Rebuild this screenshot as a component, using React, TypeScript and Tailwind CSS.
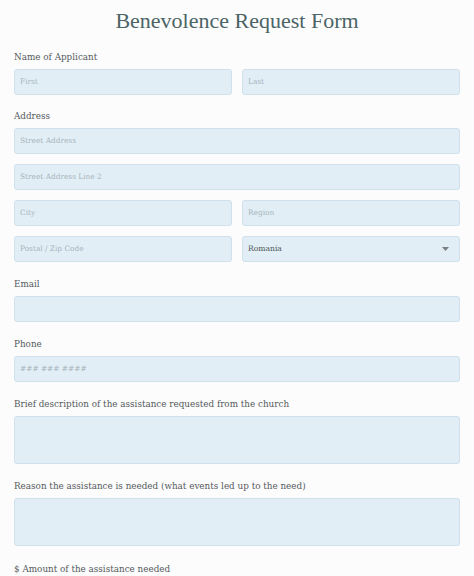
const titleFont = { fontFamily: '"Liberation Serif", serif' }
const bodyFont = { fontFamily: '"DejaVu Serif", "Liberation Serif", serif' }

function Field({ placeholder, className = '' }: { placeholder?: string; className?: string }) {
  return (
    <div
      className={`h-[26px] flex items-center px-[5px] rounded-[3px] border border-[#cfe1ec] bg-[#e1eef6] text-[7.4px] text-[#a7b4bb] ${className}`}
    >
      {placeholder}
    </div>
  )
}

function Label({ children }: { children: React.ReactNode }) {
  return <div className="text-[8.8px] leading-[14px] text-[#555a5c] mb-[5px]">{children}</div>
}

export default function App() {
  return (
    <main className="min-h-screen bg-[#fcfcfc] px-[14px] pt-[8px] pb-6" style={bodyFont}>
      <h1 className="text-center text-[22px] leading-[26px] text-[#4b6466]" style={titleFont}>
        Benevolence Request Form
      </h1>

      <div className="mt-[16px]">
        <Label>Name of Applicant</Label>
        <div className="grid grid-cols-2 gap-[10px]">
          <Field placeholder="First" />
          <Field placeholder="Last" />
        </div>
      </div>

      <div className="mt-[14px]">
        <Label>Address</Label>
        <div className="flex flex-col gap-[10px]">
          <Field placeholder="Street Address" />
          <Field placeholder="Street Address Line 2" />
          <div className="grid grid-cols-2 gap-[10px]">
            <Field placeholder="City" />
            <Field placeholder="Region" />
          </div>
          <div className="grid grid-cols-2 gap-[10px]">
            <Field placeholder="Postal / Zip Code" />
            <div className="h-[26px] flex items-center justify-between pl-[5px] pr-[10px] rounded-[3px] border border-[#cfe1ec] bg-[#e1eef6] text-[7.6px] text-[#4f5557]">
              <span>Romania</span>
              <svg width="7" height="4" viewBox="0 0 7 4">
                <path d="M0 0h7L3.5 4z" fill="#7a7f82" />
              </svg>
            </div>
          </div>
        </div>
      </div>

      <div className="mt-[15px]">
        <Label>Email</Label>
        <Field />
      </div>

      <div className="mt-[15px]">
        <Label>Phone</Label>
        <Field placeholder="### ### ####" />
      </div>

      <div className="mt-[15px]">
        <Label>Brief description of the assistance requested from the church</Label>
        <div className="h-[48px] rounded-[3px] border border-[#cfe1ec] bg-[#e1eef6]" />
      </div>

      <div className="mt-[15px]">
        <Label>Reason the assistance is needed (what events led up to the need)</Label>
        <div className="h-[48px] rounded-[3px] border border-[#cfe1ec] bg-[#e1eef6]" />
      </div>

      <div className="mt-[16px]">
        <Label>$ Amount of the assistance needed</Label>
        <Field />
      </div>
    </main>
  )
}
